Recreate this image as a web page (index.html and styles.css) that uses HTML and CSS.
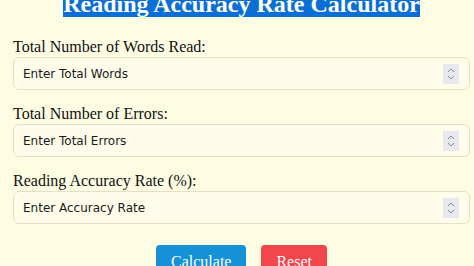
FILE: index.html
```html
<!DOCTYPE html>
<html>
<head>
<meta charset="utf-8">
<link rel="stylesheet" href="styles.css">
</head>
<body>
<div class="wrap">
  <h1 class="title"><span class="hl">Reading Accuracy Rate Calculator</span></h1>
  <div class="field first">
    <label class="label">Total Number of Words Read:</label>
    <div class="box"><span class="ph">Enter Total Words</span><span class="spin"><svg width="8" height="14" viewBox="0 0 8 14"><path d="M1 5 L4 2 L7 5 M1 9 L4 12 L7 9" fill="none" stroke="#8a8a96" stroke-width="1"/></svg></span></div>
  </div>
  <div class="field">
    <label class="label">Total Number of Errors:</label>
    <div class="box"><span class="ph">Enter Total Errors</span><span class="spin"><svg width="8" height="14" viewBox="0 0 8 14"><path d="M1 5 L4 2 L7 5 M1 9 L4 12 L7 9" fill="none" stroke="#8a8a96" stroke-width="1"/></svg></span></div>
  </div>
  <div class="field">
    <label class="label">Reading Accuracy Rate (%):</label>
    <div class="box"><span class="ph">Enter Accuracy Rate</span><span class="spin"><svg width="8" height="14" viewBox="0 0 8 14"><path d="M1 5 L4 2 L7 5 M1 9 L4 12 L7 9" fill="none" stroke="#8a8a96" stroke-width="1"/></svg></span></div>
  </div>
  <div class="buttons">
    <button class="btn calc">Calculate</button>
    <button class="btn reset">Reset</button>
  </div>
</div>
</body>
</html>
```
FILE: styles.css
```css
html, body {
  margin: 0;
  padding: 0;
  background: #fefde4;
  overflow: hidden;
}
.wrap {
  padding: 0 4px 0 13px;
  margin-top: -10px;
  font-family: "Liberation Serif", serif;
}
.title {
  margin: 0;
  text-align: center;
  font-size: 24px;
  font-weight: bold;
  line-height: 28px;
}
.hl {
  background: #0a6fd4;
  color: #ffffff;
}
.field {
  margin-top: 14px;
}
.field.first {
  margin-top: 19px;
}
.label {
  display: block;
  font-size: 16px;
  color: #111;
  line-height: 20px;
}
.box {
  height: 33px;
  box-sizing: border-box;
  border: 1px solid #e4e0c6;
  border-radius: 6px;
  background: #fffde9;
  display: flex;
  align-items: center;
  justify-content: space-between;
  padding: 0 10px 0 9px;
}
.ph {
  font-family: "DejaVu Sans", sans-serif;
  font-size: 12px;
  color: #1a1a1a;
}
.spin {
  width: 16px;
  height: 20px;
  background: #e8e8ee;
  display: flex;
  align-items: center;
  justify-content: center;
}
.buttons {
  display: flex;
  justify-content: center;
  gap: 15px;
  margin-top: 21px;
}
.btn {
  font-family: "Liberation Serif", serif;
  font-size: 16px;
  color: #fff;
  border: none;
  border-radius: 4px;
  height: 34px;
  padding: 0 15px;
}
.calc { background: #1591d8; }
.reset { background: #f2464d; }
```
